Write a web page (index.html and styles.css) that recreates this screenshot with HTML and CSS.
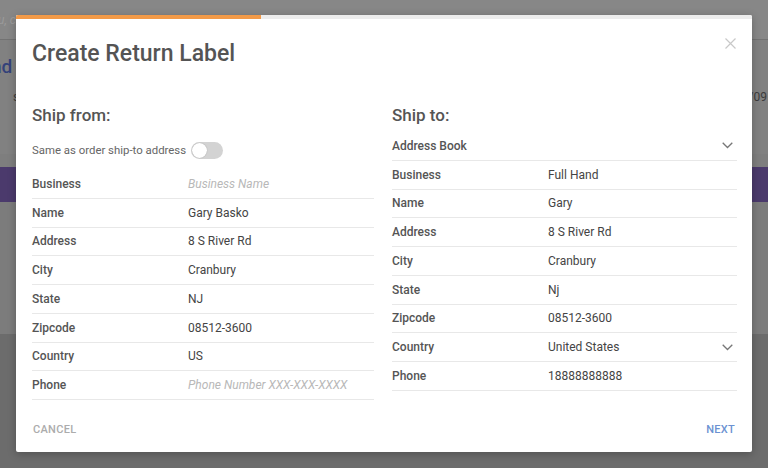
FILE: index.html
```html
<!DOCTYPE html>
<html>
<head>
<meta charset="utf-8">
<link rel="stylesheet" href="styles.css">
</head>
<body>
<div class="page">
  <div class="bg-top"><span class="bg-search">u, c</span></div>
  <div class="bg-head">
    <div class="bg-title">nd</div>
    <div class="bg-sub"><span>s</span><span>/09</span></div>
  </div>
  <div class="bg-gap"></div>
  <div class="bg-band"></div>
  <div class="bg-mid"></div>
  <div class="bg-low"></div>
</div>

<div class="dialog">
  <div class="progress"><div class="progress-fill"></div></div>
  <div class="dlg-head">
    <h1 class="title">Create Return Label</h1>
    <svg class="close" width="11" height="11" viewBox="0 0 11 11"><path d="M0.5 0.5 L10.5 10.5 M10.5 0.5 L0.5 10.5" stroke="#c8c8c8" stroke-width="1.2" fill="none"/></svg>
  </div>
  <div class="dlg-body">
    <div class="col col-from">
      <h2 class="heading">Ship from:</h2>
      <div class="same-row">
        <span>Same as order ship-to address</span>
        <span class="toggle"><span class="knob"></span></span>
      </div>
      <div class="rows">
        <div class="row"><span class="lbl">Business</span><span class="val ph">Business Name</span></div>
        <div class="row"><span class="lbl">Name</span><span class="val">Gary Basko</span></div>
        <div class="row"><span class="lbl">Address</span><span class="val">8 S River Rd</span></div>
        <div class="row"><span class="lbl">City</span><span class="val">Cranbury</span></div>
        <div class="row"><span class="lbl">State</span><span class="val">NJ</span></div>
        <div class="row"><span class="lbl">Zipcode</span><span class="val">08512-3600</span></div>
        <div class="row"><span class="lbl">Country</span><span class="val">US</span></div>
        <div class="row"><span class="lbl">Phone</span><span class="val ph">Phone Number XXX-XXX-XXXX</span></div>
      </div>
    </div>
    <div class="col col-to">
      <h2 class="heading">Ship to:</h2>
      <div class="rows">
        <div class="row"><span class="lbl wide">Address Book</span><svg class="chev" width="11" height="7" viewBox="0 0 11 7"><path d="M0.7 0.7 L5.5 5.5 L10.3 0.7" stroke="#777" stroke-width="1.3" fill="none"/></svg></div>
        <div class="row"><span class="lbl">Business</span><span class="val">Full Hand</span></div>
        <div class="row"><span class="lbl">Name</span><span class="val">Gary</span></div>
        <div class="row"><span class="lbl">Address</span><span class="val">8 S River Rd</span></div>
        <div class="row"><span class="lbl">City</span><span class="val">Cranbury</span></div>
        <div class="row"><span class="lbl">State</span><span class="val">Nj</span></div>
        <div class="row"><span class="lbl">Zipcode</span><span class="val">08512-3600</span></div>
        <div class="row"><span class="lbl">Country</span><span class="val">United States</span><svg class="chev" width="11" height="7" viewBox="0 0 11 7"><path d="M0.7 0.7 L5.5 5.5 L10.3 0.7" stroke="#777" stroke-width="1.3" fill="none"/></svg></div>
        <div class="row"><span class="lbl">Phone</span><span class="val">18888888888</span></div>
      </div>
    </div>
  </div>
  <div class="dlg-foot">
    <span class="btn cancel">CANCEL</span>
    <span class="btn next">NEXT</span>
  </div>
</div>
</body>
</html>
```

FILE: styles.css
```css
* { box-sizing: border-box; }
html, body { margin: 0; padding: 0; }
body {
  width: 768px;
  height: 468px;
  overflow: hidden;
  font-family: Roboto, "Liberation Sans", sans-serif;
  background: #6c6c6c;
  position: relative;
}

/* dimmed page behind the dialog */
.page { display: flex; flex-direction: column; height: 468px; }
.bg-top {
  height: 40px;
  background: #878787;
  border-bottom: 1px solid #727272;
  display: flex;
  align-items: center;
}
.bg-search { font-size: 12px; color: #9a9a9a; font-style: italic; margin-left: -2px; }
.bg-head { height: 114px; background: #818181; display: flex; flex-direction: column; }
.bg-title { font-size: 19px; font-weight: 500; color: #34427a; margin-top: 16px; margin-left: -9px; line-height: 22px; }
.bg-sub { display: flex; justify-content: space-between; font-size: 12px; color: #3c3c3c; margin-top: 12px; padding-left: 13px; padding-right: 1px; }
.bg-gap { height: 13px; background: #7e7e7e; }
.bg-band { height: 35px; background: #4b3a6c; }
.bg-mid { height: 132px; background: #7c7c7c; }
.bg-low { flex: 1; background: #6c6c6c; }

/* dialog */
.dialog {
  position: absolute;
  left: 16px;
  top: 15px;
  width: 736px;
  height: 437px;
  background: #fff;
  border-radius: 2px;
  box-shadow: 0 2px 8px rgba(0,0,0,0.25);
  display: flex;
  flex-direction: column;
  overflow: hidden;
}
.progress { height: 4px; background: #ececec; flex: none; }
.progress-fill { width: 245px; height: 4px; background: #f29a48; }

.dlg-head {
  display: flex;
  justify-content: space-between;
  align-items: flex-start;
  padding: 21px 16px 0 16px;
}
.title {
  margin: 0;
  font-size: 23px;
  line-height: 28px;
  font-weight: 500;
  color: #545454;
}
.close { margin-top: -2px; }

.dlg-body {
  display: grid;
  grid-template-columns: 342px 345px;
  column-gap: 18px;
  padding: 0 15px 0 16px;
  margin-top: 37px;
}
.heading {
  margin: 0;
  font-size: 17px;
  line-height: 20px;
  font-weight: 500;
  color: #555;
}
.same-row {
  display: flex;
  align-items: center;
  height: 28px;
  margin-top: 11px;
  margin-bottom: 6px;
  font-size: 11.4px;
  color: #666;
}
.toggle {
  width: 32px;
  height: 17px;
  border-radius: 9px;
  background: #d3d3d3;
  margin-left: 5px;
  display: flex;
  align-items: center;
  padding-left: 1px;
}
.knob {
  width: 15px;
  height: 15px;
  border-radius: 50%;
  background: #fff;
  box-shadow: 0 0 1px rgba(0,0,0,0.35);
}
.col-to .rows { margin-top: 7px; }

.row {
  display: flex;
  align-items: center;
  height: 28.75px;
  border-bottom: 1px solid #e8e8e8;
  font-size: 12px;
}
.lbl { width: 156px; flex: none; font-weight: 500; color: #555; }
.lbl.wide { width: auto; flex: 1; }
.val { color: #444; flex: 1; }
.val.ph { color: #b8b8b8; font-style: italic; }
.chev { margin-right: 4px; flex: none; }

.dlg-foot {
  margin-top: auto;
  height: 44px;
  display: flex;
  justify-content: space-between;
  align-items: center;
  padding: 0 17px 2px 17px;
}
.btn { font-size: 11px; font-weight: 500; letter-spacing: 0.3px; }
.cancel { color: #acacac; }
.next { color: #6c92d2; }
```
